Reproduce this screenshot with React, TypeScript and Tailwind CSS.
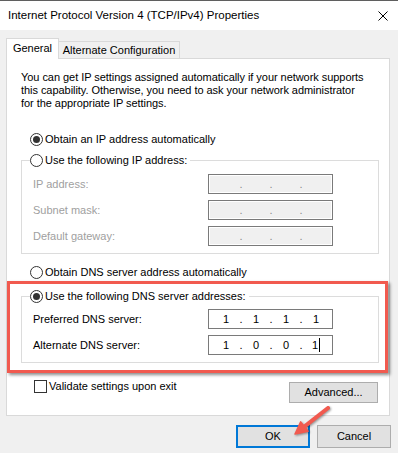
import { Fragment } from "react";

const Radio = ({ checked }: { checked?: boolean }) => (
    <span className="w-[13px] h-[13px] rounded-full border border-[#333333] bg-white flex items-center justify-center shrink-0">
        {checked && <span className="w-[7px] h-[7px] rounded-full bg-[#333333]" />}
    </span>
);

const IpField = ({ parts, disabled, cursor }: { parts: string[]; disabled?: boolean; cursor?: boolean }) => (
    <div className={`w-[125px] h-[20px] border border-[#7a7a7a] flex items-center pl-[7px] ${disabled ? 'bg-[#f0f0f0] text-[#8a8a8a] shadow-[inset_0_0_0_1px_#ffffff]' : 'bg-white text-black'}`}>
        {[0, 1, 2, 3].map(i => (
            <Fragment key={i}>
                <span className="w-[20px] flex justify-center items-center">
                    {parts[i]}
                    {cursor && i === 3 && <span className="w-px h-[14px] bg-black ml-px" />}
                </span>
                {i < 3 && <span className="w-[10px] text-center">.</span>}
            </Fragment>
        ))}
    </div>
);

const Row = ({ label, disabled, children }: { label: string; disabled?: boolean; children: React.ReactNode }) => (
    <div className="h-[20px] flex items-center">
        <span className={`pl-[11px] w-[186px] ${disabled ? 'text-[#a0a0a0]' : 'text-black'}`}>{label}</span>
        {children}
    </div>
);

const Legend = ({ text, checked }: { text: string; checked?: boolean }) => (
    <div className="-mt-[9px] ml-[8px] h-[16px] self-start bg-white pr-[3px] flex items-center gap-[2px]">
        <Radio checked={checked} />
        <span>{text}</span>
    </div>
);

export default function App() {
    return (
        <div className="relative w-[398px] h-[453px] bg-[#f0f0f0] border-t border-[#5f5f5f] overflow-hidden font-['Liberation_Sans',Arial,sans-serif] text-[11px] leading-[13px] text-black">
            <div className="h-[29px] bg-white flex items-center justify-between pl-[8px] pr-[10px]">
                <span className="text-[11.5px]">Internet Protocol Version 4 (TCP/IPv4) Properties</span>
                <svg width="10" height="10" viewBox="0 0 10 10">
                    <path d="M0.5 0.5 L9.5 9.5 M9.5 0.5 L0.5 9.5" stroke="#000" strokeWidth="1" />
                </svg>
            </div>

            <div className="relative z-10 mt-[8px] pl-[6px] flex items-end -mb-px">
                <div className="h-[21px] w-[53px] bg-white border-l border-t border-r border-[#d9d9d9] flex items-center justify-center pb-[1px]">General</div>
                <div className="h-[18px] w-[121px] bg-[#f0f0f0] border-t border-r border-b border-[#d9d9d9] flex items-center justify-center">Alternate Configuration</div>
            </div>

            <div className="ml-[6px] w-[384px] h-[358px] bg-white border border-[#d9d9d9] flex flex-col">
                <p className="mt-[12px] ml-[14px] whitespace-nowrap tracking-[-0.05px]">
                    You can get IP settings assigned automatically if your network supports<br />
                    this capability. Otherwise, you need to ask your network administrator<br />
                    for the appropriate IP settings.
                </p>

                <div className="mt-[21px] ml-[23px] h-[16px] flex items-center gap-[2px]">
                    <Radio checked />
                    <span>Obtain an IP address automatically</span>
                </div>

                <div className="mt-[13px] ml-[14px] w-[358px] border border-[#dcdcdc] flex flex-col pb-[7px]">
                    <Legend text="Use the following IP address:" />
                    <div className="mt-[6px] flex flex-col gap-[6px]">
                        <Row label="IP address:" disabled><IpField parts={['', '', '', '']} disabled /></Row>
                        <Row label="Subnet mask:" disabled><IpField parts={['', '', '', '']} disabled /></Row>
                        <Row label="Default gateway:" disabled><IpField parts={['', '', '', '']} disabled /></Row>
                    </div>
                </div>

                <div className="mt-[10px] ml-[23px] h-[16px] flex items-center gap-[2px]">
                    <Radio />
                    <span>Obtain DNS server address automatically</span>
                </div>

                <div className="mt-[1px] w-[381px] border-[3px] border-[#f15a4f] shadow-[2px_2px_3px_rgba(0,0,0,0.45)] flex flex-col">
                    <div className="mt-[12px] mb-[7px] ml-[11px] w-[358px] border border-[#dcdcdc] flex flex-col pb-[7px]">
                        <Legend text="Use the following DNS server addresses:" checked />
                        <div className="mt-[5px] flex flex-col gap-[6px]">
                            <Row label="Preferred DNS server:"><IpField parts={['1', '1', '1', '1']} /></Row>
                            <Row label="Alternate DNS server:"><IpField parts={['1', '0', '0', '1']} cursor /></Row>
                        </div>
                    </div>
                </div>

                <div className="mt-[7px] flex justify-between items-start">
                    <label className="ml-[27px] h-[13px] flex items-center gap-[2px]">
                        <span className="w-[13px] h-[13px] border border-[#333333] bg-white shrink-0" />
                        <span>Validate settings upon exit</span>
                    </label>
                    <button className="mt-[2px] mr-[11px] w-[89px] h-[21px] bg-[#e1e1e1] border border-[#adadad]">Advanced...</button>
                </div>
            </div>

            <div className="mt-[9px] flex justify-end gap-[7px] pr-[7px]">
                <button className="w-[74px] h-[23px] bg-[#e1e1e1] border-2 border-[#0078d7]">OK</button>
                <button className="w-[74px] h-[23px] bg-[#e1e1e1] border border-[#adadad]">Cancel</button>
            </div>

            <svg className="absolute left-[290px] top-[400px] drop-shadow-[1px_1px_1px_rgba(0,0,0,0.4)]" width="45" height="40" viewBox="0 0 45 40">
                <path d="M38 7 L14.4 25.6" stroke="#f15a4f" strokeWidth="4" strokeLinecap="round" />
                <path d="M5 33 L18.1 30.3 L10.7 20.9 Z" fill="#f15a4f" stroke="#f15a4f" strokeWidth="1.5" strokeLinejoin="round" />
            </svg>
        </div>
    );
}
